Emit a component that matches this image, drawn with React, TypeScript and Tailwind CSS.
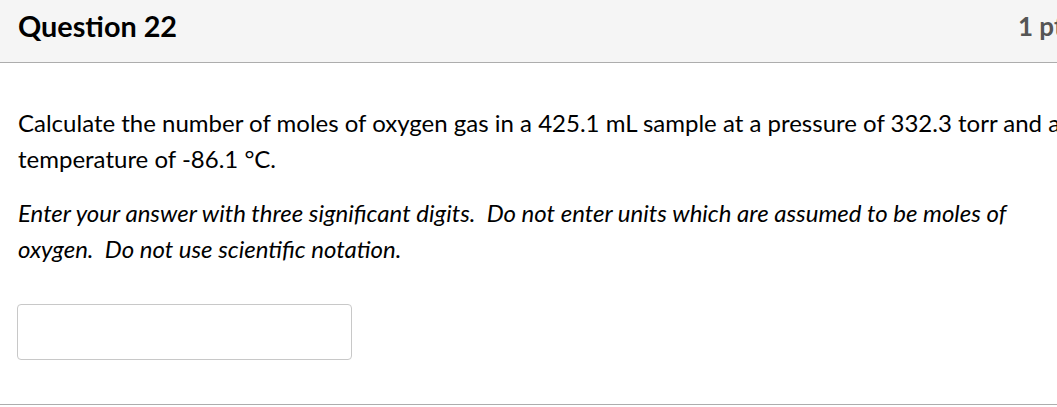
export default function App() {
  return (
    <div className="w-screen h-[407px] overflow-hidden bg-white" style={{ fontFamily: 'Lato, "Noto Sans", sans-serif' }}>
      <div className="w-[1093px] border-b border-[#adadad]">
        {/* Header */}
        <div className="h-[63px] flex items-center justify-between px-[18px] pb-[10px] bg-[#f5f5f5] border-b border-[#adadad]">
          <h2 className="text-[28.8px] font-bold text-[#000] leading-none">Question 22</h2>
          <span className="text-[26px] font-bold text-[#555] leading-none">1 pts</span>
        </div>

        {/* Body */}
        <div className="px-[18px] pt-[42px] pb-[44px]">
          <p className="text-[24px] leading-[36px] text-[#000]">
            Calculate the number of moles of oxygen gas in a 425.1 mL sample at a pressure of 332.3 torr and a temperature of -86.1 °C.
          </p>
          <p className="mt-[18px] text-[24px] leading-[36px] italic text-[#000]">
            Enter your answer with three significant digits.{'\u00a0 '}Do not enter units which are assumed to be moles of oxygen.{'\u00a0 '}Do not use scientific notation.
          </p>
          <div className="mt-[37px] -ml-px">
            <input type="text" className="w-[335px] h-[56px] border border-[#c8c8c8] rounded-[4px] bg-white outline-none" />
          </div>
        </div>
      </div>
    </div>
  );
}
